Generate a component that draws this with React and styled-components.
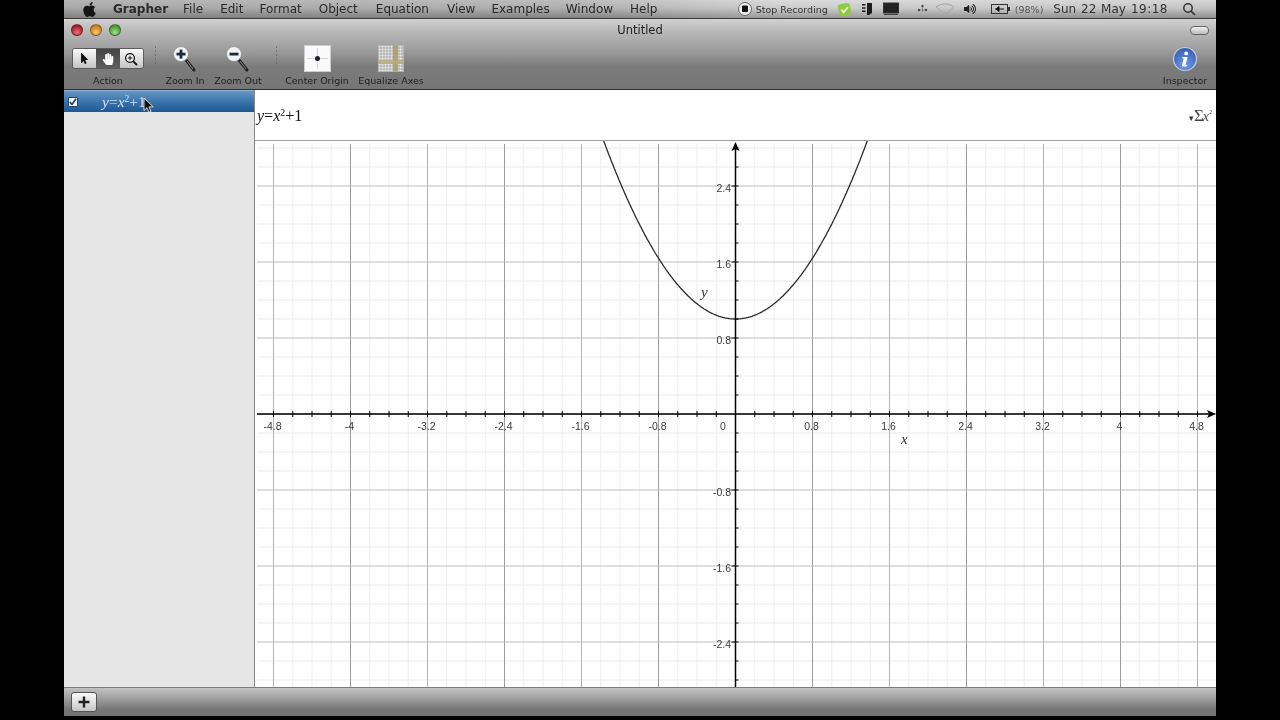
import React from 'react';
import styled, { createGlobalStyle } from 'styled-components';
import { FaApple, FaHandPaper, FaMousePointer, FaVolumeUp } from 'react-icons/fa';

const GlobalStyle = createGlobalStyle`
  html, body {
    margin: 0;
    height: 100%;
    background: #000;
    font-family: 'DejaVu Sans', 'Liberation Sans', sans-serif;
  }
`;

const Stage = styled.div`
  width: 1280px;
  height: 720px;
  display: flex;
  justify-content: center;
  align-items: flex-start;
  background: #000;
  overflow: hidden;
`;

/* the reference is a soft video capture */
const Screen = styled.div`
  position: relative;
  width: 1152px;
  height: 716px;
  display: flex;
  flex-direction: column;
  background: #e6e6e6;
  filter: blur(0.35px);
`;

const MenuBar = styled.div`
  height: 19px;
  flex: none;
  display: flex;
  align-items: center;
  padding: 0 20px 0 17px;
  box-sizing: border-box;
  border-bottom: 1px solid #3c3c3c;
  background:
    linear-gradient(90deg, rgba(90, 90, 90, 0.28) 0, rgba(90, 90, 90, 0.2) 45%, rgba(255, 255, 255, 0.12) 62%, rgba(255, 255, 255, 0) 100%),
    linear-gradient(180deg, #d6d6d6 0, #c4c4c4 45%, #8e8e8e 100%);
  color: #2a2a2a;
  font-size: 12px;
  white-space: nowrap;
`;

const AppleMark = styled(FaApple)`
  width: 17px;
  height: 17px;
  color: #161616;
  margin-right: 15px;
`;

const MenuItem = styled.span`
  margin-left: ${(p) => p.$gap || 0}px;
  font-weight: ${(p) => (p.$bold ? 700 : 400)};
`;

const StatusArea = styled.div`
  margin-left: auto;
  display: flex;
  align-items: center;
  color: #333;
`;

const StatusText = styled.span`
  font-size: ${(p) => p.$size || 12}px;
  margin-left: ${(p) => p.$gap || 0}px;
  color: ${(p) => p.$color || '#333'};
  word-spacing: ${(p) => p.$words || 0}px;
  letter-spacing: ${(p) => p.$track || 0}px;
`;

const StatusIcon = styled.svg`
  flex: none;
  margin-left: ${(p) => p.$gap || 0}px;
`;

const VolumeIcon = styled(FaVolumeUp)`
  flex: none;
  margin-left: 9px;
  color: #222;
`;

const Chrome = styled.div`
  height: 71px;
  flex: none;
  box-sizing: border-box;
  display: flex;
  flex-direction: column;
  border-bottom: 1px solid #2e2e2e;
  border-radius: 4px 4px 0 0;
  background: linear-gradient(180deg, #d2d0d0 0, #b9b8b8 18%, #9c9c9c 45%, #7b7b7b 68%, #767676 100%);
`;

const TitleRow = styled.div`
  height: 22px;
  flex: none;
  display: grid;
  grid-template-columns: 1fr auto 1fr;
  align-items: center;
  padding: 0 7px;
`;

const Lights = styled.div`
  display: flex;
  gap: 7px;
`;

const Light = styled.span`
  width: 12px;
  height: 12px;
  border-radius: 50%;
  box-sizing: border-box;
  border: 1px solid rgba(0, 0, 0, 0.35);
  background: radial-gradient(circle at 50% 75%, ${(p) => p.$glow} 0, ${(p) => p.$color} 70%);
`;

const WindowTitle = styled.span`
  font-size: 11.5px;
  color: #222;
`;

const Pill = styled.span`
  justify-self: end;
  width: 17px;
  height: 7px;
  margin-top: 1px;
  border-radius: 4px;
  border: 1px solid #666;
  background: linear-gradient(180deg, #f0f0f0, #bcbcbc);
`;

const ToolRow = styled.div`
  flex: 1;
  display: flex;
  padding: 1px 3px 0 8px;
`;

const Tool = styled.div`
  width: ${(p) => p.$w}px;
  margin-left: ${(p) => p.$gap || 0}px;
  flex: none;
  display: flex;
  flex-direction: column;
  align-items: center;
`;

const ToolArt = styled.div`
  height: 33px;
  display: flex;
  align-items: center;
  justify-content: center;
`;

const ToolLabel = styled.span`
  font-size: 9.5px;
  line-height: 12px;
  color: #1f1f1f;
  white-space: nowrap;
`;

const Separator = styled.span`
  width: 1px;
  height: 20px;
  margin: 4px 0 0 ${(p) => p.$gap}px;
  flex: none;
  background: repeating-linear-gradient(180deg, #5e5e5e 0 2px, transparent 2px 4px);
  opacity: 0.6;
`;

const Spacer = styled.div`
  flex: 1;
`;

const Segmented = styled.div`
  display: flex;
  height: 19px;
  border-radius: 3px;
  overflow: hidden;
  border: 1px solid #5c5c5c;
`;

const Segment = styled.span`
  width: 23.3px;
  display: flex;
  align-items: center;
  justify-content: center;
  color: ${(p) => (p.$active ? '#fff' : '#111')};
  background: ${(p) => (p.$active ? 'linear-gradient(180deg, #464646, #5e5e5e)' : 'linear-gradient(180deg, #fafafa, #c4c4c4)')};
`;

const Body = styled.div`
  flex: 1;
  min-height: 0;
  display: flex;
`;

const Sidebar = styled.aside`
  width: 191px;
  flex: none;
  box-sizing: border-box;
  border-right: 1px solid #8a8a8a;
  background: #e6e6e6;
`;

const EquationRow = styled.div`
  height: 22px;
  display: flex;
  align-items: center;
  padding-left: 4px;
  box-sizing: border-box;
  background: linear-gradient(180deg, #6896c4 0, #3f78b0 45%, #1f5890 100%);
  border-top: 1px solid #8fb5da;
`;

const Check = styled.span`
  width: 10px;
  height: 10px;
  flex: none;
  box-sizing: border-box;
  border: 1px solid #28476a;
  border-radius: 1px;
  background: #eef3f8;
  display: flex;
  align-items: center;
  justify-content: center;
`;

const Formula = styled.span`
  font-family: 'Liberation Serif', 'Times New Roman', serif;
  font-size: ${(p) => p.$size}px;
  line-height: 1;
  color: ${(p) => p.$color};
  margin-left: ${(p) => p.$gap || 0}px;
  white-space: nowrap;

  i {
    font-style: italic;
  }

  sup {
    font-size: 0.62em;
    line-height: 0;
    vertical-align: 0.5em;
  }
`;

const Cursor = styled.svg`
  position: absolute;
  left: 79px;
  top: 97px;
`;

const Main = styled.main`
  flex: 1;
  min-width: 0;
  display: flex;
  flex-direction: column;
  background: #fff;
`;

const FormulaBar = styled.div`
  height: 51px;
  flex: none;
  box-sizing: border-box;
  padding: 18px 4px 0 2px;
  display: flex;
  justify-content: space-between;
  border-bottom: 1px solid #a4a4a4;
`;

const Sigma = styled.span`
  font-family: 'Liberation Serif', serif;
  font-size: 17px;
  line-height: 16px;
  color: #444;

  small {
    font-size: 9px;
    color: #333;
  }

  i {
    font-size: 14px;
    margin-left: -1px;
  }

  sup {
    font-size: 6px;
    line-height: 0;
  }
`;

const GraphSvg = styled.svg`
  display: block;
  width: 961px;
  height: 546px;
  background: #fff;
`;

const BottomBar = styled.div`
  height: 29px;
  flex: none;
  box-sizing: border-box;
  display: flex;
  align-items: center;
  padding: 0 0 0 7px;
  border-top: 1px solid #7c7c7c;
  background: linear-gradient(180deg, #c2c2c2 0, #9e9e9e 40%, #767676 75%, #727272 100%);
`;

const AddButton = styled.button`
  width: 26px;
  height: 20px;
  padding: 0;
  display: flex;
  align-items: center;
  justify-content: center;
  border: 1px solid #555;
  border-radius: 3px;
  background: linear-gradient(180deg, #fbfbfb, #c6c6c6);
`;

// graph geometry, in pixels inside the svg
const X0 = 480.5;
const Y0 = 273;
const UNIT_X = 96.25;
const UNIT_Y = 95;
const STEP_X = UNIT_X * 0.2;
const STEP_Y = UNIT_Y * 0.2;
const W = 961;
const H = 546;

const range = (from, to) => Array.from({ length: to - from + 1 }, (_, i) => from + i);
const XS = range(-25, 25).filter((k) => X0 + k * STEP_X > 1 && X0 + k * STEP_X < W - 1);
const YS = range(-14, 14).filter((k) => Y0 - k * STEP_Y > 4 && Y0 - k * STEP_Y < H);
const label = (k) => String(Math.round(k * 2) / 10);

const curve = range(-137, 137)
  .map((i) => {
    const x = i / 100;
    return `${i === -137 ? 'M' : 'L'}${(X0 + x * UNIT_X).toFixed(1)} ${(Y0 - (x * x + 1) * UNIT_Y).toFixed(1)}`;
  })
  .join(' ');

function Graph() {
  return (
    <GraphSvg viewBox={`0 0 ${W} ${H}`}>
      {XS.filter((k) => k % 4 !== 0).map((k) => (
        <line key={k} x1={X0 + k * STEP_X} x2={X0 + k * STEP_X} y1={3} y2={H} stroke="#eeeef1" />
      ))}
      {YS.filter((k) => k % 4 !== 0).map((k) => (
        <line key={k} x1={2} x2={W} y1={Y0 - k * STEP_Y} y2={Y0 - k * STEP_Y} stroke="#e9e9eb" />
      ))}
      {XS.filter((k) => k % 4 === 0).map((k) => (
        <line key={k} x1={X0 + k * STEP_X} x2={X0 + k * STEP_X} y1={3} y2={H} stroke={k % 8 === 0 ? '#b4b4b4' : '#9c9c9c'} />
      ))}
      {YS.filter((k) => k % 4 === 0).map((k) => (
        <line key={k} x1={2} x2={W} y1={Y0 - k * STEP_Y} y2={Y0 - k * STEP_Y} stroke="#bdbdbd" />
      ))}

      <path d={curve} fill="none" stroke="#2b2b2b" strokeWidth="1.3" />

      <line x1={2} x2={W - 3} y1={Y0} y2={Y0} stroke="#000" strokeWidth="1.5" />
      <line x1={X0} x2={X0} y1={5} y2={H} stroke="#000" strokeWidth="1.5" />
      <path d={`M${W} ${Y0} l-9 -4 l2 4 l-2 4 z`} fill="#000" />
      <path d={`M${X0} 1 l-4 9 l4 -2 l4 2 z`} fill="#000" />

      {XS.filter((k) => k !== 0).map((k) => (
        <line key={k} x1={X0 + k * STEP_X} x2={X0 + k * STEP_X} y1={Y0 - 3} y2={Y0 + 3} stroke="#000" />
      ))}
      {YS.filter((k) => k !== 0).map((k) => (
        <line key={k} x1={X0 - (k % 4 === 0 ? 4 : 0)} x2={X0 + 3} y1={Y0 - k * STEP_Y} y2={Y0 - k * STEP_Y} stroke="#000" />
      ))}

      <g fontFamily="'Liberation Sans', Arial, sans-serif" fontSize="10.5" fill="#3a3a3a">
        {XS.filter((k) => k % 4 === 0 && k !== 0).map((k) => (
          <text key={k} x={X0 + k * STEP_X - 1} y={Y0 + 16} textAnchor="middle">{label(k)}</text>
        ))}
        <text x={468} y={Y0 + 16} textAnchor="middle">0</text>
        {YS.filter((k) => k % 4 === 0 && k !== 0).map((k) => (
          <text key={k} x={476} y={Y0 - k * STEP_Y + 5.5} textAnchor="end">{label(k)}</text>
        ))}
      </g>
      <g fontFamily="'Liberation Serif', serif" fontSize="15" fontStyle="italic" fill="#333">
        <text x={646} y={303}>x</text>
        <text x={446} y={156}>y</text>
      </g>
    </GraphSvg>
  );
}

function ZoomGlass({ minus }) {
  return (
    <svg width="26" height="28" viewBox="0 0 26 28">
      <line x1="14" y1="15" x2="22" y2="25" stroke="#222" strokeWidth="3" strokeLinecap="round" />
      <line x1="15" y1="16" x2="21" y2="24" stroke="#8a8a8a" strokeWidth="1" />
      <circle cx="9" cy="9" r="7.5" fill="#f2f2f2" stroke="#9a9a9a" />
      <rect x="4.5" y="7.7" width="9" height="2.8" fill="#1d2a3a" />
      {!minus && <rect x="7.6" y="4.6" width="2.8" height="9" fill="#1d2a3a" />}
    </svg>
  );
}

function CenterOrigin() {
  return (
    <svg width="27" height="27" viewBox="0 0 27 27">
      <rect x="0.5" y="0.5" width="26" height="26" fill="#fafafa" stroke="#cfcfcf" />
      <path d="M13.5 3V24M3 13.5H24" stroke="#d4d4d4" />
      <circle cx="13.5" cy="13.5" r="2.5" fill="#1b2230" />
    </svg>
  );
}

function EqualizeAxes() {
  const lines = [3, 6, 9, 12, 15, 18, 21, 24];
  return (
    <svg width="26" height="27" viewBox="0 0 26 27">
      <rect x="0.5" y="0.5" width="25" height="26" fill="#ececec" stroke="#b5b5b5" />
      {lines.map((v) => (
        <path key={v} d={`M${v} 1V26M1 ${v}H25`} stroke="#9a9a9a" strokeWidth="0.7" />
      ))}
      <rect x="15" y="0.5" width="5" height="26" fill="#a89a66" opacity="0.85" />
      <rect x="0.5" y="15" width="25" height="4" fill="#b9ad7c" opacity="0.85" />
    </svg>
  );
}

function InfoBadge() {
  return (
    <svg width="26" height="26" viewBox="0 0 26 26">
      <defs>
        <radialGradient id="infoFill" cx="50%" cy="75%" r="70%">
          <stop offset="0" stopColor="#6d9be8" />
          <stop offset="1" stopColor="#3a5fb4" />
        </radialGradient>
      </defs>
      <circle cx="13" cy="13" r="11.5" fill="url(#infoFill)" stroke="#c6cede" strokeWidth="1.2" />
      <circle cx="14.2" cy="7.4" r="1.9" fill="#fff" />
      <path d="M10.6 11h5l-2 8h1.6l-.5 1.6h-5l2-8H10.2z" fill="#fff" />
    </svg>
  );
}

const MENUS = [
  ['File', 15],
  ['Edit', 17],
  ['Format', 16],
  ['Object', 17],
  ['Equation', 18],
  ['View', 18],
  ['Examples', 16],
  ['Window', 16],
  ['Help', 17],
];

export default function App() {
  return (
    <Stage>
      <GlobalStyle />
      <Screen>
        <MenuBar>
          <AppleMark />
          <MenuItem $bold>Grapher</MenuItem>
          {MENUS.map(([name, gap]) => (
            <MenuItem key={name} $gap={gap}>{name}</MenuItem>
          ))}
          <StatusArea>
            <StatusIcon width="14" height="14" viewBox="0 0 14 14">
              <circle cx="7" cy="7" r="6.5" fill="#eee" stroke="#666" />
              <rect x="4" y="3.5" width="6" height="6.5" rx="1" fill="#111" />
            </StatusIcon>
            <StatusText $size={9.5} $gap={4}>Stop Recording</StatusText>
            <StatusIcon $gap={9} width="15" height="15" viewBox="0 0 15 15">
              <rect x="1.5" y="1.5" width="12" height="12" rx="3" fill="#8ccb3e" transform="rotate(-12 7.5 7.5)" />
              <path d="M4.5 7.5l2.3 3 4-5.5" fill="none" stroke="#eef9d8" strokeWidth="1.8" />
            </StatusIcon>
            <StatusIcon $gap={9} width="12" height="14" viewBox="0 0 12 14">
              <path d="M1 2h3.5v1.6H1zM1 5.2h3.5v1.6H1zM1 8.4h3.5V10H1z" fill="#1c1c1c" />
              <path d="M6 1h5v10l-3 2H6z" fill="#1c1c1c" />
            </StatusIcon>
            <StatusIcon $gap={10} width="16" height="14" viewBox="0 0 16 14">
              <rect x="0.5" y="1" width="15" height="10" fill="#222" stroke="#333" />
              <path d="M1 12.5h14" stroke="#444" />
            </StatusIcon>
            <StatusIcon $gap={17} width="13" height="12" viewBox="0 0 13 12">
              <circle cx="6.5" cy="3" r="1.2" fill="#444" />
              <circle cx="3" cy="7" r="1.2" fill="#444" />
              <circle cx="10" cy="7" r="1.2" fill="#444" />
              <path d="M6.5 3v6M3 7h7" stroke="#666" strokeWidth="0.6" />
            </StatusIcon>
            <StatusIcon $gap={6} width="20" height="12" viewBox="0 0 20 12">
              <path d="M1 4C6 0 14 0 19 4L10 11.5z" fill="none" stroke="#a6a6a6" />
            </StatusIcon>
            <VolumeIcon size={12} />
            <StatusIcon $gap={15} width="19" height="12" viewBox="0 0 19 12">
              <rect x="0.5" y="1.5" width="16" height="9" fill="none" stroke="#333" />
              <rect x="17" y="4" width="2" height="4" fill="#333" />
              <path d="M4 6h9M8 3.5L5 6l3 2.5z" stroke="#111" fill="#111" />
            </StatusIcon>
            <StatusText $size={9.5} $gap={5} $color="#555">(98%)</StatusText>
            <StatusText $gap={10} $words={1}>Sun 22 May</StatusText>
            <StatusText $gap={5} $track={0.5}>19:18</StatusText>
            <StatusIcon $gap={14} width="14" height="14" viewBox="0 0 14 14">
              <circle cx="6" cy="6" r="4.2" fill="none" stroke="#333" strokeWidth="1.5" />
              <line x1="9" y1="9" x2="13" y2="13" stroke="#333" strokeWidth="1.7" />
            </StatusIcon>
          </StatusArea>
        </MenuBar>

        <Chrome>
          <TitleRow>
            <Lights>
              <Light $color="#a5202e" $glow="#ef6d76" />
              <Light $color="#c97f18" $glow="#f7cb7a" />
              <Light $color="#4c9a35" $glow="#a3df8c" />
            </Lights>
            <WindowTitle>Untitled</WindowTitle>
            <Pill />
          </TitleRow>
          <ToolRow>
            <Tool $w={72}>
              <ToolArt>
                <Segmented>
                  <Segment><FaMousePointer size={11} /></Segment>
                  <Segment $active><FaHandPaper size={12} /></Segment>
                  <Segment>
                    <svg width="14" height="14" viewBox="0 0 14 14">
                      <circle cx="6" cy="6" r="4.4" fill="#eee" stroke="#111" strokeWidth="1.3" />
                      <path d="M3.8 6h4.4M6 3.8v4.4" stroke="#111" />
                      <line x1="9.3" y1="9.3" x2="13" y2="13" stroke="#111" strokeWidth="1.8" />
                    </svg>
                  </Segment>
                </Segmented>
              </ToolArt>
              <ToolLabel>Action</ToolLabel>
            </Tool>
            <Separator $gap={11} />
            <Tool $w={48} $gap={5}>
              <ToolArt><ZoomGlass /></ToolArt>
              <ToolLabel>Zoom In</ToolLabel>
            </Tool>
            <Tool $w={48} $gap={5}>
              <ToolArt><ZoomGlass minus /></ToolArt>
              <ToolLabel>Zoom Out</ToolLabel>
            </Tool>
            <Separator $gap={14} />
            <Tool $w={70} $gap={5}>
              <ToolArt><CenterOrigin /></ToolArt>
              <ToolLabel>Center Origin</ToolLabel>
            </Tool>
            <Tool $w={74} $gap={2}>
              <ToolArt><EqualizeAxes /></ToolArt>
              <ToolLabel>Equalize Axes</ToolLabel>
            </Tool>
            <Spacer />
            <Tool $w={56}>
              <ToolArt><InfoBadge /></ToolArt>
              <ToolLabel>Inspector</ToolLabel>
            </Tool>
          </ToolRow>
        </Chrome>

        <Body>
          <Sidebar>
            <EquationRow>
              <Check>
                <svg width="8" height="8" viewBox="0 0 8 8">
                  <path d="M1 4l2 2.5L7 .8" fill="none" stroke="#1d3f66" strokeWidth="1.6" />
                </svg>
              </Check>
              <Formula $size={15.5} $color="#cfe0f2" $gap={24}>
                <i>y</i>=<i>x</i><sup>2</sup>+1
              </Formula>
            </EquationRow>
          </Sidebar>
          <Main>
            <FormulaBar>
              <Formula $size={16} $color="#111">
                <i>y</i>=<i>x</i><sup>2</sup>+1
              </Formula>
              <Sigma><small>▾</small>Σ<i>x</i><sup>2</sup></Sigma>
            </FormulaBar>
            <Graph />
          </Main>
        </Body>

        <BottomBar>
          <AddButton aria-label="Add">
            <svg width="14" height="14" viewBox="0 0 14 14">
              <path d="M7 1.5v11M1.5 7h11" stroke="#222" strokeWidth="2.4" />
            </svg>
          </AddButton>
        </BottomBar>

        <Cursor width="12" height="17" viewBox="0 0 12 17">
          <path d="M1 1v12.5l3-2.8 2 4.6 2-.9-2-4.5h4.2z" fill="#111" stroke="#fff" strokeWidth="0.8" />
        </Cursor>
      </Screen>
    </Stage>
  );
}
